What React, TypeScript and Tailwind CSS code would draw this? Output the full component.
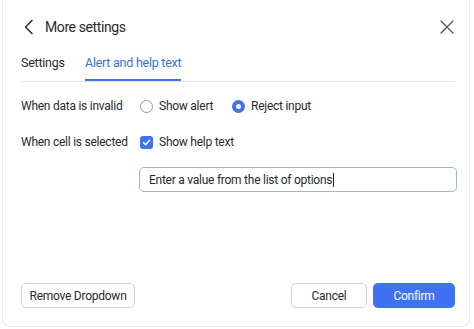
import React from "react";

const FONT = { fontFamily: "Roboto, 'Liberation Sans', sans-serif" };

function Radio({ checked }: { checked?: boolean }) {
  return checked ? (
    <span className="flex h-[13px] w-[13px] items-center justify-center rounded-full bg-[#3e72f0]">
      <span className="h-[5px] w-[5px] rounded-full bg-white" />
    </span>
  ) : (
    <span className="h-[13px] w-[13px] rounded-full border border-[#9a9a9a] bg-white" />
  );
}

export default function App() {
  return (
    <div className="h-[329px] w-[474px] overflow-hidden bg-white text-[#2a2a2a]" style={FONT}>
      <div className="ml-[2px] mt-[-6px] flex h-[333px] w-[468px] flex-col rounded-lg border border-[#e9e9ec] bg-white pb-[18px] pl-[18px] pr-[14px] pt-[12px] text-[12px] tracking-[-0.25px]">
        {/* header */}
        <div className="flex h-[40px] items-center">
          <svg width="14" height="16" viewBox="0 0 14 16" className="ml-[1px]">
            <path d="M10 1.5 L3.5 8 L10 14.5" fill="none" stroke="#2e2e2e" strokeWidth="1.6" strokeLinecap="round" strokeLinejoin="round" />
          </svg>
          <span className="ml-[9px] text-[14px] tracking-[-0.4px]">More settings</span>
          <svg width="14" height="14" viewBox="0 0 14 14" className="ml-auto mr-[1px]">
            <path d="M1 1 L13 13 M13 1 L1 13" fill="none" stroke="#555" strokeWidth="1.3" strokeLinecap="round" />
          </svg>
        </div>

        {/* tabs */}
        <div className="flex h-[35px] border-b border-[#e4e4e4] text-[12.5px]">
          <div className="flex w-[64px] items-center pb-[1px]">Settings</div>
          <div className="flex items-center border-b-2 border-[#3e72f0] pt-[1px] text-[#3a6de0]">
            Alert and help text
          </div>
        </div>

        {/* rows */}
        <div className="mt-[12px] flex h-[24px] items-center">
          <div className="w-[119px]">When data is invalid</div>
          <div className="flex w-[92px] items-center gap-[6px]">
            <Radio />
            <span>Show alert</span>
          </div>
          <div className="flex items-center gap-[6px]">
            <Radio checked />
            <span>Reject input</span>
          </div>
        </div>

        <div className="mt-[12px] flex h-[24px] items-center">
          <div className="w-[119px]">When cell is selected</div>
          <div className="flex items-center gap-[6px]">
            <span className="flex h-[13px] w-[13px] items-center justify-center rounded-[3px] bg-[#3e72f0]">
              <svg width="9" height="9" viewBox="0 0 9 9">
                <path d="M1.5 4.7 L3.6 6.7 L7.6 2.3" fill="none" stroke="white" strokeWidth="1.5" strokeLinecap="round" strokeLinejoin="round" />
              </svg>
            </span>
            <span>Show help text</span>
          </div>
        </div>

        <div className="ml-[118px] mt-[13px] flex h-[25px] w-[318px] items-center rounded-[5px] border border-[#9db3e4] pl-[9px]">
          <span>Enter a value from the list of options</span>
          <span className="ml-[1px] h-[14px] w-px bg-[#222]" />
        </div>

        {/* footer */}
        <div className="mt-auto flex items-center">
          <button className="h-[25px] w-[114px] rounded-[5px] border border-[#d3d3d3] bg-white">
            Remove Dropdown
          </button>
          <button className="ml-auto h-[25px] w-[76px] rounded-[5px] border border-[#d3d3d3] bg-white">
            Cancel
          </button>
          <button className="ml-[6px] h-[25px] w-[82px] rounded-[5px] bg-[#3e72f0] text-white">
            Confirm
          </button>
        </div>
      </div>
    </div>
  );
}
